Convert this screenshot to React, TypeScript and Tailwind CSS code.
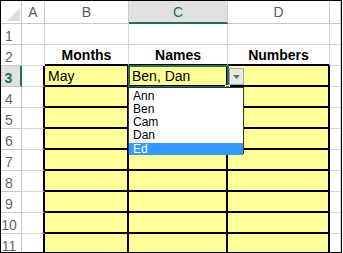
import React from "react";

const font = { fontFamily: '"Liberation Sans", Arial, sans-serif' };

const colLetters = ["A", "B", "C", "D", ""];
const colWidths = ["w-[23px]", "w-[84px]", "w-[99px]", "w-[102px]", "w-[11px]"];

const items = ["Ann", "Ben", "Cam", "Dan", "Ed"];

const rowValues: Record<number, string[]> = {
  2: ["", "Months", "Names", "Numbers", ""],
  3: ["", "May", "Ben, Dan", "", ""],
};

function cellClass(row: number, col: number) {
  const yellow = row >= 3 && col >= 1 && col <= 3;
  if (yellow) return "bg-[#ffff99] border-r-2 border-b-2 border-black";
  if (row >= 3 && col === 0) return "border-r-2 border-r-black border-b border-b-[#d4d4d4]";
  if (row === 2 && col >= 1 && col <= 3) return "border-r border-r-[#d4d4d4] border-b-2 border-b-black";
  return "border-r border-b border-[#d4d4d4]";
}

const SheetRow = ({ row }: { row: number }) => {
  const vals = rowValues[row] ?? ["", "", "", "", ""];
  const active = row === 3;
  return (
    <div className="flex h-[21px] shrink-0">
      <div
        className={
          active
            ? "w-[21px] shrink-0 flex items-end justify-center pr-[4px] pb-[1px] bg-[#e1e1e1] text-[#217346] font-bold text-[14px] leading-none border-r-2 border-r-[#217346] border-b border-b-[#c8c8c8]"
            : "w-[21px] shrink-0 flex items-end justify-center pr-[4px] pb-[1px] text-[#666666] text-[14px] leading-none border-r border-b border-[#c8c8c8]"
        }
      >
        {row}
      </div>
      {vals.map((v, i) => (
        <div
          key={i}
          className={`${colWidths[i]} shrink-0 flex items-end pb-[2px] text-[14px] leading-none text-black overflow-hidden ${
            row === 2 ? "justify-center font-bold text-[13px]" : "pl-[3px]"
          } ${cellClass(row, i)}`}
        >
          {v}
        </div>
      ))}
    </div>
  );
};

export default function App() {
  return (
    <div className="w-[343px] h-[253px] bg-white" style={font}>
      <div className="relative w-[342px] h-[253px] border border-black overflow-hidden flex flex-col">
        {/* column headers */}
        <div className="flex h-[23px] shrink-0">
          <div className="w-[21px] shrink-0 relative border-r border-b border-[#c8c8c8]">
            <svg className="absolute left-[6px] top-[7px]" width="13" height="13" viewBox="0 0 13 13">
              <polygon points="13,0 13,13 0,13" fill="#dcdcdc" />
            </svg>
          </div>
          {colLetters.map((l, i) => (
            <div
              key={i}
              className={
                l === "C"
                  ? `${colWidths[i]} shrink-0 flex items-center justify-center text-[14px] text-[#217346] bg-[#e1e1e1] border-r border-r-[#c8c8c8] border-b-2 border-b-[#217346] pt-[1px]`
                  : `${colWidths[i]} shrink-0 flex items-center justify-center text-[14px] text-[#595959] border-r border-b border-[#c8c8c8]`
              }
            >
              {l}
            </div>
          ))}
        </div>

        {Array.from({ length: 11 }, (_, i) => (
          <SheetRow key={i} row={i + 1} />
        ))}

        {/* selected cell C3 */}
        <div className="absolute left-[127px] top-[64px] w-[101px] h-[23px] border-2 border-[#217346]" />
        <div className="absolute left-[224px] top-[84px] w-[5px] h-[5px] bg-[#217346] border border-white" />

        {/* dropdown button */}
        <div className="absolute left-[228px] top-[67px] w-[15px] h-[17px] bg-[#e8e8e8] border border-[#a8a8a8] flex items-center justify-center">
          <svg width="7" height="4" viewBox="0 0 7 4">
            <polygon points="0,0 7,0 3.5,4" fill="#6b6b6b" />
          </svg>
        </div>

        {/* dropdown list */}
        <div className="absolute left-[127px] top-[86px] w-[116px] h-[67px] bg-white border border-[#333333] pt-[2px] flex flex-col">
          {items.map((it) => (
            <div
              key={it}
              className={
                it === "Ed"
                  ? "h-[12px] mt-[1px] bg-[#3399ff] text-white text-[12px] leading-[12px] pl-[4px]"
                  : "h-[13px] text-black text-[12px] leading-[13px] pl-[4px]"
              }
            >
              {it}
            </div>
          ))}
        </div>
      </div>
    </div>
  );
}
